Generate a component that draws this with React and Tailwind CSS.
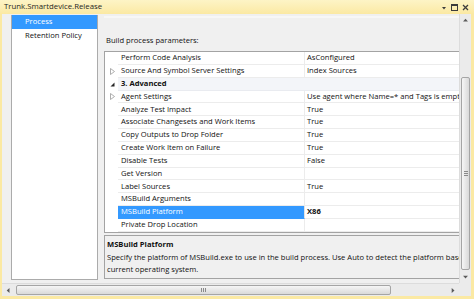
import React from "react";

const rows = [
  { name: "Perform Code Analysis", value: "AsConfigured" },
  { name: "Source And Symbol Server Settings", value: "Index Sources", expand: true },
  { name: "3. Advanced", category: true },
  { name: "Agent Settings", value: "Use agent where Name=* and Tags is empty; Max Wait Time: 04:00:00", expand: true },
  { name: "Analyze Test Impact", value: "True" },
  { name: "Associate Changesets and Work Items", value: "True" },
  { name: "Copy Outputs to Drop Folder", value: "True" },
  { name: "Create Work Item on Failure", value: "True" },
  { name: "Disable Tests", value: "False" },
  { name: "Get Version", value: "" },
  { name: "Label Sources", value: "True" },
  { name: "MSBuild Arguments", value: "" },
  { name: "MSBuild Platform", value: "X86", selected: true },
  { name: "Private Drop Location", value: "" },
];

const font = { fontFamily: '"Open Sans", "Noto Sans", sans-serif' };

const Arrow = ({ dir }) => {
  const pts = {
    up: "0,4 3.5,0 7,4",
    down: "0,0 3.5,4 7,0",
    left: "4,0 0,3.5 4,7",
    right: "0,0 4,3.5 0,7",
  }[dir];
  const vertical = dir === "up" || dir === "down";
  return (
    <svg width={vertical ? 7 : 4} height={vertical ? 4 : 7} viewBox={vertical ? "0 0 7 4" : "0 0 4 7"}>
      <polygon points={pts} fill="#5a5a5a" transform={vertical ? "scale(0.7) translate(1.5,1)" : "scale(0.7) translate(1,1.5)"} />
    </svg>
  );
};

const GridRow = ({ row }) => {
  let icon = null;
  if (row.expand) {
    icon = (
      <svg width="5" height="7" viewBox="0 0 5 7">
        <polygon points="0.5,0.5 4.5,3.5 0.5,6.5" fill="#ffffff" stroke="#9a9a9a" strokeWidth="0.8" />
      </svg>
    );
  }
  if (row.category) {
    icon = (
      <svg width="5" height="5" viewBox="0 0 5 5">
        <polygon points="4.5,0.5 4.5,4.5 0.5,4.5" fill="#262626" />
      </svg>
    );
  }

  return (
    <div className="flex h-[12.85px]">
      <div className="w-[13px] shrink-0 flex items-center justify-center pl-[1px]">{icon}</div>
      {row.category ? (
        <div className="flex-1 bg-[#f3f5f9] font-bold pl-[3px] flex items-center border-b border-[#e9ebf0]">
          {row.name}
        </div>
      ) : (
        <>
          <div
            className={`w-[187px] shrink-0 pl-[3px] flex items-center border-r border-b whitespace-nowrap ${
              row.selected ? "bg-[#3399ff] text-white border-r-[#e3e3e3] border-b-[#3399ff]" : "border-[#ececec]"
            }`}
          >
            {row.name}
          </div>
          <div
            className={`flex-1 pl-[2px] flex items-center border-b border-[#ececec] whitespace-nowrap overflow-hidden ${
              row.selected ? "font-bold" : ""
            }`}
          >
            {row.value}
          </div>
        </>
      )}
    </div>
  );
};

const App = () => {
  return (
    <div
      className="w-[474px] h-[299px] bg-[#fbe9a3] flex flex-col overflow-hidden text-[7.6px] text-[#111111] leading-none"
      style={font}
    >
      {/* title bar */}
      <div className="h-[14px] shrink-0 flex items-center justify-between pl-[4px] pr-[5px] bg-gradient-to-b from-[#fdf4c6] to-[#fbe9a3] text-[#1e1e1e]">
        <span className="text-[7.8px]">Trunk.Smartdevice.Release</span>
        <div className="flex items-center gap-[4px] mt-[1px]">
          <svg width="6" height="6" viewBox="0 0 6 6">
            <polygon points="1,2 5,2 3,4.5" fill="#3c3c3c" />
          </svg>
          <svg width="7" height="7" viewBox="0 0 7 7">
            <rect x="0.5" y="0.5" width="6" height="6" fill="none" stroke="#3c3c3c" strokeWidth="1" />
            <line x1="0.5" y1="1.5" x2="6.5" y2="1.5" stroke="#3c3c3c" strokeWidth="1" />
          </svg>
          <svg width="7" height="7" viewBox="0 0 7 7">
            <path d="M1 1 L6 6 M6 1 L1 6" stroke="#3c3c3c" strokeWidth="1.3" />
          </svg>
        </div>
      </div>

      {/* content + vertical scrollbar */}
      <div className="h-[269px] shrink-0 flex pl-[2px] pr-[3px]">
        <div className="w-[457px] h-full bg-[#f0f0f0] flex overflow-hidden">
          {/* left navigation */}
          <div className="ml-[9px] mt-[1px] w-[87px] h-[265px] shrink-0 bg-white border-x border-b border-[#ababab] flex flex-col">
            <div className="h-[14px] bg-[#3399ff] text-white pl-[13px] flex items-center">Process</div>
            <div className="h-[13px] pl-[13px] flex items-center">Retention Policy</div>
          </div>

          {/* parameters */}
          <div className="ml-[6px] w-[400px] shrink-0 flex flex-col">
            <div className="h-[2px] mt-[2px] bg-[#f7f7f7]" />
            <div className="h-[12px] mt-[17px] pl-[2px] flex items-center">Build process parameters:</div>
            <div className="mt-[4px] border border-[#a3a3a3] bg-white">
              {rows.map((row) => (
                <GridRow key={row.name} row={row} />
              ))}
            </div>
            <div className="mt-[2px] h-[44px] border border-[#a3a3a3] bg-[#f0f0f0] pl-[2px] pt-[3px]">
              <div className="h-[12px] flex items-center font-bold">MSBuild Platform</div>
              <div className="h-[12px] mt-[1px] flex items-center whitespace-nowrap">
                Specify the platform of MSBuild.exe to use in the build process. Use Auto to detect the platform based on the
              </div>
              <div className="h-[12px] flex items-center">current operating system.</div>
            </div>
          </div>
        </div>

        {/* vertical scrollbar */}
        <div className="w-[12px] h-full flex flex-col bg-[#ebebeb] border-l border-[#dcdcdc]">
          <div className="h-[12px] flex items-center justify-center">
            <Arrow dir="up" />
          </div>
          <div className="flex-1 flex flex-col pt-[51px] px-[1px]">
            <div className="h-[193px] rounded-[2px] border border-[#a5a5a5] bg-gradient-to-r from-[#f6f6f6] to-[#d9d9d9] flex flex-col items-center justify-center gap-[1px]">
              <div className="w-[4px] h-[1px] bg-[#8a8a8a]" />
              <div className="w-[4px] h-[1px] bg-[#8a8a8a]" />
              <div className="w-[4px] h-[1px] bg-[#8a8a8a]" />
            </div>
          </div>
          <div className="h-[12px] flex items-center justify-center">
            <Arrow dir="down" />
          </div>
        </div>
      </div>

      {/* horizontal scrollbar */}
      <div className="h-[13px] shrink-0 flex pl-[2px] pr-[3px]">
        <div className="w-[457px] h-full flex bg-[#ebebeb] border-t border-[#dcdcdc]">
          <div className="w-[12px] flex items-center justify-center">
            <Arrow dir="left" />
          </div>
          <div className="flex-1 flex items-center pl-[2px]">
            <div className="w-[375px] h-[10px] rounded-[2px] border border-[#a5a5a5] bg-gradient-to-b from-[#f6f6f6] to-[#d9d9d9] flex items-center justify-center gap-[1px]">
              <div className="w-[1px] h-[4px] bg-[#8a8a8a]" />
              <div className="w-[1px] h-[4px] bg-[#8a8a8a]" />
              <div className="w-[1px] h-[4px] bg-[#8a8a8a]" />
            </div>
          </div>
          <div className="w-[12px] flex items-center justify-center">
            <Arrow dir="right" />
          </div>
        </div>
        <div className="w-[12px] h-full bg-[#ebebeb]" />
      </div>
    </div>
  );
};

export default App;
